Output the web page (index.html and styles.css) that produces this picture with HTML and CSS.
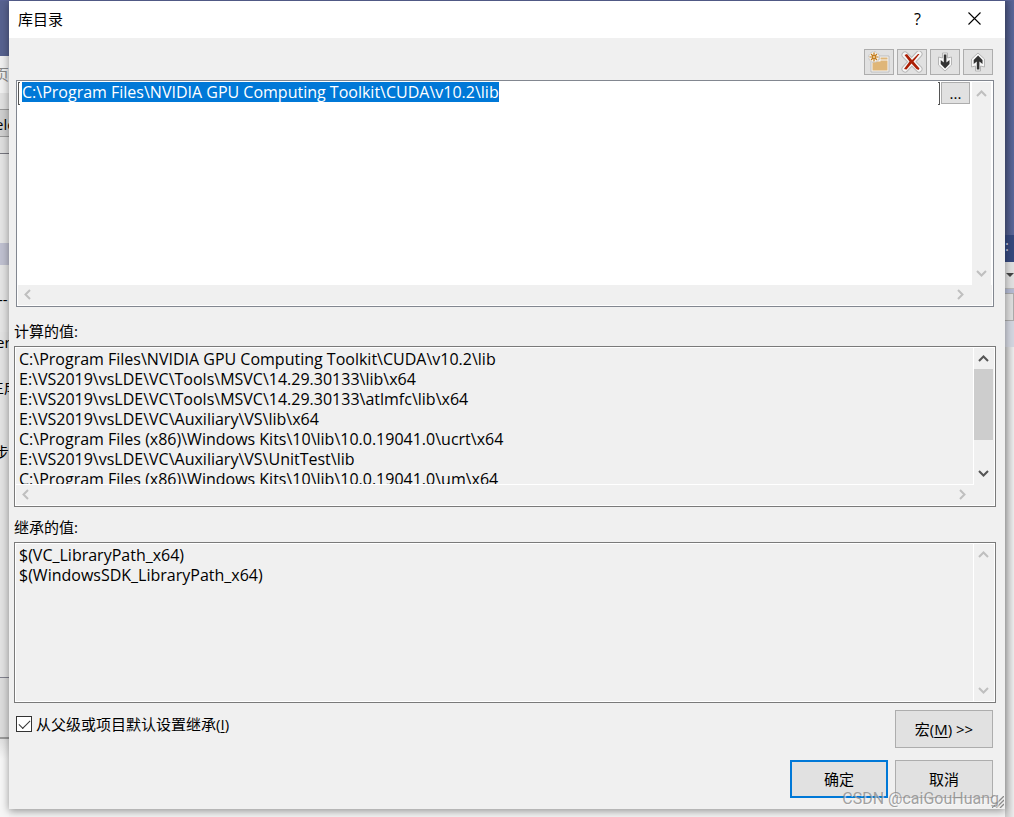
FILE: index.html
```html
<!DOCTYPE html>
<html lang="zh-CN">
<head>
<meta charset="utf-8">
<title>库目录</title>
<link rel="stylesheet" href="styles.css">
</head>
<body>
<div class="desktop">
  <aside class="behind behind-left" aria-hidden="true">
    <div class="l-frame"></div>
    <div class="l-page"><span>页</span></div>
    <div class="l-tool"></div>
    <div class="l-combo"><span>ele</span></div>
    <div class="l-gap"></div>
    <div class="l-list"></div>
    <div class="l-band"></div>
    <div class="l-dash"><span>--</span></div>
    <div class="l-item"><span>er</span></div>
    <div class="l-item"><span>生成</span></div>
    <div class="l-item l-step"><span>步</span></div>
    <div class="l-foot"></div>
    <div class="l-base"></div>
  </aside>

  <main class="dialog">
    <header class="titlebar">
      <h1>库目录</h1>
      <button class="caption" type="button" aria-label="帮助">?</button>
      <button class="caption" type="button" aria-label="关闭">
        <svg width="13" height="13" viewBox="0 0 13 13"><path d="M.5.5l12 12M12.5.5l-12 12" fill="none" stroke="#000" stroke-width="1.1"/></svg>
      </button>
    </header>

    <div class="toolbar">
      <button class="tool" type="button" aria-label="新行">
        <svg width="24" height="22" viewBox="0 0 24 22">
          <path d="M4 9h8V5h10v16H4z" fill="#f6f6f6" stroke="#bdbdbd"/>
          <path d="M5.500 10.500h8v-1h7v10h-15z" fill="#dfb678"/>
          <path d="M13.500 7.500h7" stroke="#dfb678" stroke-width="2"/>
          <circle cx="7" cy="6" r="5.300" fill="#f8f5ef" stroke="#c4c4c4" stroke-dasharray="3 1"/>
          <path d="M7 1.500v9M2.500 6h9M4 3l6 6M10 3L4 9" stroke="#c27a19" stroke-width="1.200"/>
          <circle cx="7" cy="6" r="1.500" fill="#f8e2b8" stroke="#c27a19"/>
        </svg>
      </button>
      <button class="tool" type="button" aria-label="删除">
        <svg width="22" height="22" viewBox="0 0 22 22">
          <path d="M4 4l14 14M18 3L4 18" stroke="#b9b9b9" stroke-width="7" stroke-linecap="round"/>
          <path d="M4 4l14 14M18 3L4 18" stroke="#f7f7f7" stroke-width="5" stroke-linecap="round"/>
          <path d="M3.500 4L6 3l5 6 6-6h1.500l-6 7.500 6 7-1 1.500-2-1-5-5.500-5 6L3 18l5.500-7.500z" fill="#ab1f05"/>
        </svg>
      </button>
      <button class="tool" type="button" aria-label="下移">
        <svg width="16" height="20" viewBox="0 0 16 20">
          <path d="M5.500 1h5v5l4-1v8L8 19l-6.500-6V5l4 1z" fill="#f7f7f7" stroke="#b5b5b5"/>
          <path d="M6.800 2.500h2.600v8l3.100-2.500v4L8.100 16.500 3.700 12V8l3.100 2.500z" fill="#333"/>
        </svg>
      </button>
      <button class="tool" type="button" aria-label="上移">
        <svg width="16" height="20" viewBox="0 0 16 20">
          <path d="M5.500 19h5v-5l4 1V7L8 1 1.500 7v8l4-1z" fill="#f7f7f7" stroke="#b5b5b5"/>
          <path d="M6.800 17.500h2.600v-8l3.100 2.500V8L8.100 3.500 3.700 8v4l3.100-2.500z" fill="#333"/>
        </svg>
      </button>
    </div>

    <section class="editor">
      <div class="rows">
        <div class="row">
          <div class="cell">
            <input class="path" type="text" aria-label="路径" value="C:\Program Files\NVIDIA GPU Computing Toolkit\CUDA\v10.2\lib">
          </div>
          <button class="browse" type="button">...</button>
        </div>
      </div>
      <div class="vbar">
        <svg class="arrow" viewBox="0 0 11 11"><path d="M1 8l4.500-4.500L10 8"/></svg>
        <svg class="arrow" viewBox="0 0 11 11"><path d="M1 3l4.500 4.500L10 3"/></svg>
      </div>
      <div class="hbar">
        <svg class="arrow" viewBox="0 0 11 11"><path d="M8 1L3.500 5.500 8 10"/></svg>
        <svg class="arrow" viewBox="0 0 11 11"><path d="M3 1l4.500 4.500L3 10"/></svg>
      </div>
    </section>

    <label class="caption-text" for="evaluated">计算的值:</label>
    <section class="box">
      <textarea id="evaluated" class="values divided" readonly>C:\Program Files\NVIDIA GPU Computing Toolkit\CUDA\v10.2\lib
E:\VS2019\vsLDE\VC\Tools\MSVC\14.29.30133\lib\x64
E:\VS2019\vsLDE\VC\Tools\MSVC\14.29.30133\atlmfc\lib\x64
E:\VS2019\vsLDE\VC\Auxiliary\VS\lib\x64
C:\Program Files (x86)\Windows Kits\10\lib\10.0.19041.0\ucrt\x64
E:\VS2019\vsLDE\VC\Auxiliary\VS\UnitTest\lib
C:\Program Files (x86)\Windows Kits\10\lib\10.0.19041.0\um\x64</textarea>
      <div class="vbar active">
        <svg class="arrow" viewBox="0 0 11 11"><path d="M1 8l4.500-4.500L10 8"/></svg>
        <div class="track"><div class="thumb"></div></div>
        <svg class="arrow" viewBox="0 0 11 11"><path d="M1 3l4.500 4.500L10 3"/></svg>
      </div>
      <div class="hbar">
        <svg class="arrow" viewBox="0 0 11 11"><path d="M8 1L3.500 5.500 8 10"/></svg>
        <svg class="arrow" viewBox="0 0 11 11"><path d="M3 1l4.500 4.500L3 10"/></svg>
      </div>
    </section>

    <label class="caption-text second" for="inherited">继承的值:</label>
    <section class="box">
      <textarea id="inherited" class="values tall" readonly>$(VC_LibraryPath_x64)
$(WindowsSDK_LibraryPath_x64)</textarea>
      <div class="vbar">
        <svg class="arrow" viewBox="0 0 11 11"><path d="M1 8l4.500-4.500L10 8"/></svg>
        <svg class="arrow" viewBox="0 0 11 11"><path d="M1 3l4.500 4.500L10 3"/></svg>
      </div>
    </section>

    <div class="options">
      <label class="inherit"><input type="checkbox" checked><span>从父级或项目默认设置继承(<u>I</u>)</span></label>
      <button class="btn" type="button">宏(<u>M</u>) &gt;&gt;</button>
    </div>
    <footer class="actions">
      <button class="btn primary" type="button">确定</button>
      <button class="btn" type="button">取消</button>
    </footer>
    <svg class="grip" width="12" height="12" viewBox="0 0 12 12"><path d="M0 12L12 0M4 12l8-8M8 12l4-4" stroke="#8a8a8a" stroke-width="1.300"/></svg>
    <div class="watermark">CSDN @caiGouHuang</div>
  </main>

  <aside class="behind behind-right" aria-hidden="true">
    <div class="r-frame"></div>
    <div class="r-title"><span>:</span></div>
    <div class="r-menu"><svg width="8" height="5" viewBox="0 0 8 5"><path d="M0 0h8L4 4z" fill="#444"/></svg></div>
    <div class="r-line"></div>
    <div class="r-combo"></div>
    <div class="r-tint"></div>
  </aside>
</div>
</body>
</html>
```
FILE: styles.css
```css
* { box-sizing: border-box; }

body {
  margin: 0;
  font: 15px/20px "Open Sans", "Noto Sans CJK SC", sans-serif;
  color: #000;
  background: #f4f4f4;
}

button, input, textarea { font: inherit; color: inherit; margin: 0; }
button { padding: 0; }
svg { display: block; fill: none; }
u { text-underline-offset: 2px; }

.desktop {
  display: grid;
  grid-template-columns: 9px minmax(0, 1fr) 9px;
  min-height: 100vh;
  padding-top: 1px;
  background: linear-gradient(#5a6496 1px, transparent 1px);
  overflow: hidden;
}

/* Slivers of the windows behind the dialog */
.behind { overflow: hidden; white-space: nowrap; }
.behind span { display: block; }
.behind-left { background: #f4f4f4; }
.l-frame { height: 55px; background: #57628f; }
.l-page { height: 37px; padding-top: 8px; background: #f0f0f0; color: #888; }
.l-page span { margin-left: -6px; }
.l-tool { height: 16px; background: #e0e0e0; }
.l-combo { height: 28px; padding-top: 4px; border: solid #999; border-width: 1px 0; background: #cfcfcf; }
.l-combo span { margin-left: -5px; }
.l-gap { height: 17px; border-bottom: 1px solid #76767e; background: #dedede; }
.l-list { height: 89px; background: #e4e4e4; }
.l-band { height: 22px; background: #bfc0d0; }
.l-dash { height: 67px; padding-top: 24px; background: #e4e4e4; }
.l-dash span { margin-left: -2px; }
.l-item { height: 45px; background: #e2e2e2; }
.l-item span { margin-left: -4px; }
.l-item + .l-item span { margin-left: -11px; }
.l-item.l-step span { margin-left: -6px; }
.l-step { height: 256px; padding-top: 20px; border-bottom: 1px solid #82828e; }
.l-foot { height: 61px; border-bottom: 2px solid #9a9a9a; background: #dcdcdc; }
.l-base { height: 78px; background: linear-gradient(#e0e0e0, #f6f6f6 20px); }

.behind-right { background: linear-gradient(90deg, #c8c8c8, #ececec); }
.r-frame { height: 234px; background: linear-gradient(90deg, #4b5580, #5a6698); }
.r-title { height: 27px; background: #35477c; color: #c5cce5; }
.r-menu { display: grid; place-items: center; height: 27px; background: #e0e0e0; border-bottom: 1px solid #bbb; }
.r-line { height: 4px; background: #b4bad2; }
.r-combo { height: 28px; border: solid #aaa; border-width: 1px 1px 1px 0; background: #ddd; }
.r-tint { height: 26px; background: #d2d5df; }

/* Dialog */
.dialog {
  position: relative;
  align-self: start;
  padding-bottom: 11px;
  background: #f0f0f0;
  box-shadow: 0 2px 8px #0006;
}
.titlebar {
  display: flex;
  align-items: center;
  height: 37px;
  padding: 0 2px 0 9px;
  background: #fff;
}
.titlebar h1 { flex: 1; margin: 0; padding-bottom: 2px; font-size: 15px; font-weight: 400; }
.caption {
  display: grid;
  place-items: center;
  width: 57px;
  height: 37px;
  padding-bottom: 2px;
  border: 0;
  background: none;
  font-size: 16px;
}
.toolbar {
  display: flex;
  justify-content: flex-end;
  gap: 3px;
  padding: 11px 12px 5px;
}
.tool {
  display: grid;
  place-items: center;
  width: 30px;
  height: 26px;
  border: 1px solid #adadad;
  background: #e1e1e1;
}

.editor {
  display: grid;
  grid-template-columns: minmax(0, 1fr) 20px;
  margin: 0 11px 0 7px;
  padding: 1px;
  border: 1px solid #828790;
  background: #fff;
}
.rows { height: 203px; }
.row { display: flex; }
/* Vertical edges with short ticks at each corner */
.cell {
  flex: 1;
  height: 23px;
  padding: 0 3px;
  border: solid #555;
  border-width: 0 1px;
  background:
    linear-gradient(#555, #555) 0 0 / 1px 1px,
    linear-gradient(#555, #555) 100% 0 / 1px 1px,
    linear-gradient(#555, #555) 0 100% / 1px 1px,
    linear-gradient(#555, #555) 100% 100% / 1px 1px;
  background-repeat: no-repeat;
}
.path {
  display: block;
  field-sizing: content;
  height: 20px;
  padding: 0;
  border: 0;
  outline: 0;
  background: #0078d7;
  color: #fff;
  font-size: 16px;
}
.browse {
  width: 29px;
  height: 22px;
  margin: 0 2px 0 1px;
  border: 1px solid #adadad;
  background: #e1e1e1;
}

.vbar, .hbar { display: flex; justify-content: space-between; align-items: center; background: #f0f0f0; }
.vbar { flex-direction: column; width: 19px; padding: 6px 0; }
.hbar { grid-column: 1 / -1; height: 20px; padding: 0 26px 2px 4px; }
.arrow { width: 11px; height: 11px; stroke: #bfbfbf; stroke-width: 2; }
.active .arrow { stroke: #555; }
.track { flex: 1; width: 19px; padding: 5px 0; }
.thumb { height: 71px; background: #cdcdcd; }

.caption-text { display: block; margin: 14px 5px 5px; }
.caption-text.second { margin: 10px 5px 5px; }
.box {
  display: grid;
  grid-template-columns: minmax(0, 1fr) 19px;
  margin: 0 9px 0 5px;
  padding-right: 2px;
  border: 1px solid #7a7a7a;
  outline: 1px solid #fff;
  outline-offset: -2px;
  background: #f0f0f0;
}
.values {
  display: block;
  width: 100%;
  height: 138px;
  padding: 2px 4px 0;
  border: solid #fff;
  border-width: 0 1px 0 0;
  outline: 0;
  resize: none;
  overflow: hidden;
  white-space: pre;
  background: none;
  font-size: 16px;
}
.divided { border-bottom-width: 1px; }
.tall { height: 159px; }
.box .hbar { height: 21px; padding: 0 25px 2px 5px; }

.options {
  display: flex;
  justify-content: space-between;
  align-items: flex-start;
  padding: 7px 12px 12px 7px;
}
.inherit { display: flex; align-items: center; gap: 4px; padding-top: 4px; }
.inherit input {
  appearance: none;
  width: 16px;
  height: 16px;
  border: 1px solid #333;
  background: #fff;
}
.inherit input:checked::before {
  content: "";
  display: block;
  width: 10px;
  height: 5px;
  margin: 3px 0 0 2px;
  border: solid #333;
  border-width: 0 0 1px 1px;
  transform: rotate(-45deg);
}
.btn {
  width: 98px;
  height: 38px;
  border: 1px solid #adadad;
  background: #e1e1e1;
}
.primary { border: 2px solid #0078d7; }
.actions { display: flex; justify-content: flex-end; gap: 7px; padding-right: 12px; }
.grip { position: absolute; right: 1px; bottom: 1px; }
.watermark {
  position: absolute;
  right: 6px;
  bottom: 0;
  font: 16px/20px Roboto, sans-serif;
  color: #8a8a8acc;
  text-shadow: 1px 1px 0 #fff8;
}
```
